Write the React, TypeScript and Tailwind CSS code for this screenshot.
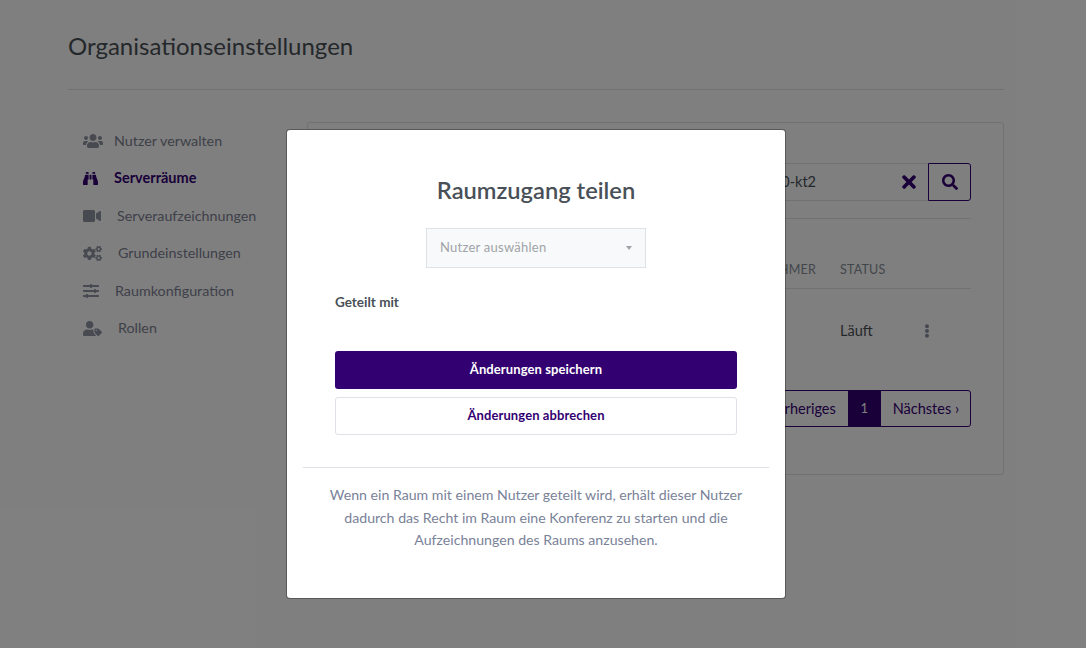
import { FaUsers, FaBinoculars, FaVideo, FaCogs, FaSlidersH, FaUserTag, FaTimes, FaSearch, FaEllipsisV } from 'react-icons/fa';

const NAV = [
  { label: 'Nutzer verwalten', icon: FaUsers, gap: 'w-[31px]', size: 'text-[20px]' },
  { label: 'Serverräume', icon: FaBinoculars, gap: 'w-[31px]', size: 'text-[15px]', active: true },
  { label: 'Serveraufzeichnungen', icon: FaVideo, gap: 'w-[34px]', size: 'text-[18px]' },
  { label: 'Grundeinstellungen', icon: FaCogs, gap: 'w-[35px]', size: 'text-[19px]' },
  { label: 'Raumkonfiguration', icon: FaSlidersH, gap: 'w-[32px]', size: 'text-[16px]' },
  { label: 'Rollen', icon: FaUserTag, gap: 'w-[35px]', size: 'text-[19px]' },
];

function Sidebar() {
  return (
    <nav className="w-[239px] shrink-0 pl-[15px] -mt-[0.25px] flex flex-col">
      {NAV.map(item => (
        <a key={item.label} className={`flex items-center h-[37.5px] ${item.active ? 'text-[14.5px] font-bold text-[#330072]' : 'text-[14.3px] text-[#7c8292]'}`}>
          <span className={`${item.gap} shrink-0`}>
            <item.icon className={`${item.size} ${item.active ? 'text-[#330072]' : 'text-[#8f95a3]'}`} />
          </span>
          {item.label}
        </a>
      ))}
    </nav>
  );
}

function RoomCard() {
  return (
    <section className="flex-1 h-[353px] border border-[#dee2e6] rounded-[3px] px-[32px] pt-[40px]">
      <div className="flex h-[38px]">
        <div className="flex-1 flex items-center border-y border-[#dee2e6] pl-3 pr-[9px]">
          <span className="flex-1 text-right pr-[83px] text-[14.5px] text-[#495057]">ro-3x0-kt2</span>
          <FaTimes className="text-[20px] text-[#330072]" />
        </div>
        <button className="w-[43px] flex items-center justify-center border border-[#330072] rounded-r-[3px] text-[#330072]">
          <FaSearch className="text-[16px]" />
        </button>
      </div>
      <div className="mt-[17px] border-t border-[#dee2e6]" />
      <div className="mt-[41px] flex items-center h-[20px] text-[12.5px] text-[#868e96] uppercase tracking-[0.2px]">
        <span className="flex-1 text-right pr-[24px]">Teilnehmer</span>
        <span className="w-[131px]">Status</span>
      </div>
      <div className="mt-[8px] border-t border-[#dee2e6]" />
      <div className="flex items-center h-[84px] text-[14.5px] text-[#495057]">
        <span className="flex-1" />
        <span className="w-[80px]">Läuft</span>
        <FaEllipsisV className="text-[14px] text-[#8a90a0]" />
        <span className="w-[37px]" />
      </div>
      <div className="mt-[17px] flex justify-end">
        <div className="flex h-[37px] border border-[#330072] rounded-[3px] text-[14.5px] text-[#330072]">
          <span className="flex items-center px-[12px]">‹ Vorheriges</span>
          <span className="flex items-center justify-center w-[33px] bg-[#330072] text-white text-[13px]">1</span>
          <span className="flex items-center pl-[12px] pr-[11px]">Nächstes ›</span>
        </div>
      </div>
    </section>
  );
}

function ShareModal() {
  return (
    <div className="absolute left-[287px] top-[130px] w-[498px] h-[468px] bg-white rounded-[3px] shadow-[0_0_0_1px_rgba(0,0,0,0.3)] flex flex-col items-center px-[16px]">
      <h2 className="mt-[45px] h-[32px] flex items-center text-[23.7px] font-semibold text-[#495057]">Raumzugang teilen</h2>
      <div className="mt-[21px] w-[220px] h-[40px] flex items-center justify-between bg-[#f8f9fa] border border-[#dee2e6] pl-[13px] pr-[13px] text-[13px] tracking-[0.25px] text-[#a0a4a8]">
        Nutzer auswählen
        <span className="border-x-[3.5px] border-x-transparent border-t-[4px] border-t-[#a0a4a8]" />
      </div>
      <p className="mt-[26px] self-start pl-[32px] h-[17px] flex items-center text-[13.5px] font-bold text-[#495057]">Geteilt mit</p>
      <button className="mt-[40px] w-[402px] h-[38px] rounded-[3px] bg-[#330072] text-[13px] font-bold tracking-[0.1px] text-white">Änderungen speichern</button>
      <button className="mt-[8px] w-[402px] h-[38px] rounded-[3px] bg-white border border-[#dee2e6] text-[13px] font-bold tracking-[0.1px] text-[#330072]">Änderungen abbrechen</button>
      <div className="mt-[32px] w-[466px] border-t border-[#dee2e6]" />
      <p className="mt-[16px] w-[430px] text-center text-[14.15px] leading-[22.5px] text-[#7a8298]">
        Wenn ein Raum mit einem Nutzer geteilt wird, erhält dieser Nutzer dadurch das Recht im Raum eine Konferenz zu starten und die Aufzeichnungen des Raums anzusehen.
      </p>
    </div>
  );
}

export default function App() {
  return (
    <div className="relative w-[1086px] h-[648px] overflow-hidden bg-white font-['Lato','Noto_Sans',sans-serif]">
      <main className="pl-[68px] pr-[82px] pt-[30px]">
        <h1 className="h-[32px] flex items-center text-[24px] text-[#495057]">Organisationseinstellungen</h1>
        <div className="mt-[27px] border-t border-[#dee2e6]" />
        <div className="mt-[32px] flex">
          <Sidebar />
          <RoomCard />
        </div>
      </main>
      <div className="absolute inset-0 bg-black/50" />
      <ShareModal />
    </div>
  );
}
